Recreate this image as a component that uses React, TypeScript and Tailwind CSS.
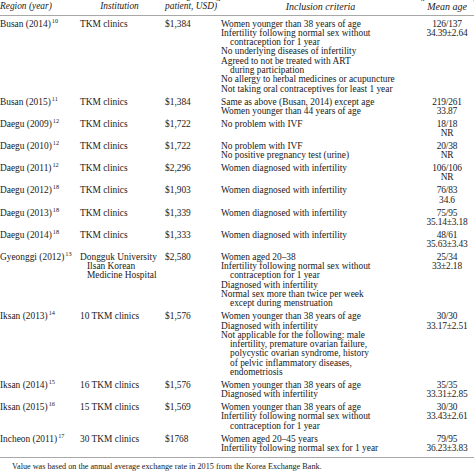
import React from 'react';

type Row = {
  region: string
  refNo: string
  inst: string[]
  cost: string
  criteria: string[][]
  mean: string[]
};

const rows: Row[] = [
  {
    region: 'Busan (2014)', refNo: '10', inst: ['TKM clinics'], cost: '$1,384',
    criteria: [
      ['Women younger than 38 years of age'],
      ['Infertility following normal sex without', 'contraception for 1 year'],
      ['No underlying diseases of infertility'],
      ['Agreed to not be treated with ART', 'during participation'],
      ['No allergy to herbal medicines or acupuncture'],
      ['Not taking oral contraceptives for least 1 year'],
    ],
    mean: ['126/137', '34.39±2.64'],
  },
  {
    region: 'Busan (2015)', refNo: '11', inst: ['TKM clinics'], cost: '$1,384',
    criteria: [['Same as above (Busan, 2014) except age'], ['Women younger than 44 years of age']],
    mean: ['219/261', '33.87'],
  },
  { region: 'Daegu (2009)', refNo: '12', inst: ['TKM clinics'], cost: '$1,722', criteria: [['No problem with IVF']], mean: ['18/18', 'NR'] },
  {
    region: 'Daegu (2010)', refNo: '12', inst: ['TKM clinics'], cost: '$1,722',
    criteria: [['No problem with IVF'], ['No positive pregnancy test (urine)']],
    mean: ['20/38', 'NR'],
  },
  { region: 'Daegu (2011)', refNo: '12', inst: ['TKM clinics'], cost: '$2,296', criteria: [['Women diagnosed with infertility']], mean: ['106/106', 'NR'] },
  { region: 'Daegu (2012)', refNo: '18', inst: ['TKM clinics'], cost: '$1,903', criteria: [['Women diagnosed with infertility']], mean: ['76/83', '34.6'] },
  { region: 'Daegu (2013)', refNo: '18', inst: ['TKM clinics'], cost: '$1,339', criteria: [['Women diagnosed with infertility']], mean: ['75/95', '35.14±3.18'] },
  { region: 'Daegu (2014)', refNo: '18', inst: ['TKM clinics'], cost: '$1,333', criteria: [['Women diagnosed with infertility']], mean: ['48/61', '35.63±3.43'] },
  {
    region: 'Gyeonggi (2012)', refNo: '13', inst: ['Dongguk University', 'Ilsan Korean', 'Medicine Hospital'], cost: '$2,580',
    criteria: [
      ['Women aged 20–38'],
      ['Infertility following normal sex without', 'contraception for 1 year'],
      ['Diagnosed with infertility'],
      ['Normal sex more than twice per week', 'except during menstruation'],
    ],
    mean: ['25/34', '33±2.18'],
  },
  {
    region: 'Iksan (2013)', refNo: '14', inst: ['10 TKM clinics'], cost: '$1,576',
    criteria: [
      ['Women younger than 38 years of age'],
      ['Diagnosed with infertility'],
      ['Not applicable for the following: male', 'infertility, premature ovarian failure,', 'polycystic ovarian syndrome, history', 'of pelvic inflammatory diseases,', 'endometriosis'],
    ],
    mean: ['30/30', '33.17±2.51'],
  },
  {
    region: 'Iksan (2014)', refNo: '15', inst: ['16 TKM clinics'], cost: '$1,576',
    criteria: [['Women younger than 38 years of age'], ['Diagnosed with infertility']],
    mean: ['35/35', '33.31±2.85'],
  },
  {
    region: 'Iksan (2015)', refNo: '16', inst: ['15 TKM clinics'], cost: '$1,569',
    criteria: [['Women younger than 38 years of age'], ['Infertility following normal sex without', 'contraception for 1 year']],
    mean: ['30/30', '33.43±2.61'],
  },
  {
    region: 'Incheon (2011)', refNo: '17', inst: ['30 TKM clinics'], cost: '$1768',
    criteria: [['Women aged 20–45 years'], ['Infertility following normal sex for 1 year']],
    mean: ['79/95', '36.23±3.83'],
  },
];

function Lines({ lines, indent }: { lines: string[]; indent: string }) {
  return (
    <div>
      {lines.map((line, i) => (
        <div key={i} className={i === 0 ? 'whitespace-nowrap' : `whitespace-nowrap ${indent}`}>{line}</div>
      ))}
    </div>
  );
}

export default function App() {
  return (
    <div className="w-[474px] h-[474px] overflow-hidden bg-white text-[#1a1a1a] font-['Liberation_Serif',serif] text-[9.4px] leading-[9.3px]">
      <div className="mt-[-7.6px]">
        {/* header, its top line is cut off */}
        <div className="grid grid-cols-[80px_85px_56px_199px_54px] items-end italic pb-[4px]">
          <div className="whitespace-nowrap">Region (year)</div>
          <div className="text-center pr-[6px]">Institution</div>
          <div className="whitespace-nowrap">
            <div>Average cost (per</div>
            <div>patient, USD)</div>
          </div>
          <div className="text-center text-[10px]">Inclusion criteria</div>
          <div className="text-center whitespace-nowrap">
            <div>(final/enrolled)</div>
            <div className="text-[10px]">Mean age</div>
          </div>
        </div>
        <div className="h-px bg-[#a8a8a8]" />

        <div className="pb-[3.5px]">
          {rows.map((row) => (
            <div key={row.region} className="grid grid-cols-[80px_85px_56px_199px_54px] pt-[3.6px]">
              <div className="whitespace-nowrap">
                {row.region}
                <sup className="text-[6.3px] ml-px top-[-4px]">{row.refNo}</sup>
              </div>
              <Lines lines={row.inst} indent="pl-[7px]" />
              <div>{row.cost}</div>
              <div>
                {row.criteria.map((c, i) => (
                  <Lines key={i} lines={c} indent="pl-[9px]" />
                ))}
              </div>
              <div className="text-center whitespace-nowrap tracking-[-0.15px]">
                {row.mean.map((m, i) => (
                  <div key={i}>{m}</div>
                ))}
              </div>
            </div>
          ))}
        </div>
        <div className="h-px bg-[#a8a8a8]" />
        <div className="pl-[12px] pt-[4px] whitespace-nowrap text-[8.2px]">
          Value was based on the annual average exchange rate in 2015 from the Korea Exchange Bank.
        </div>
      </div>
    </div>
  );
}
